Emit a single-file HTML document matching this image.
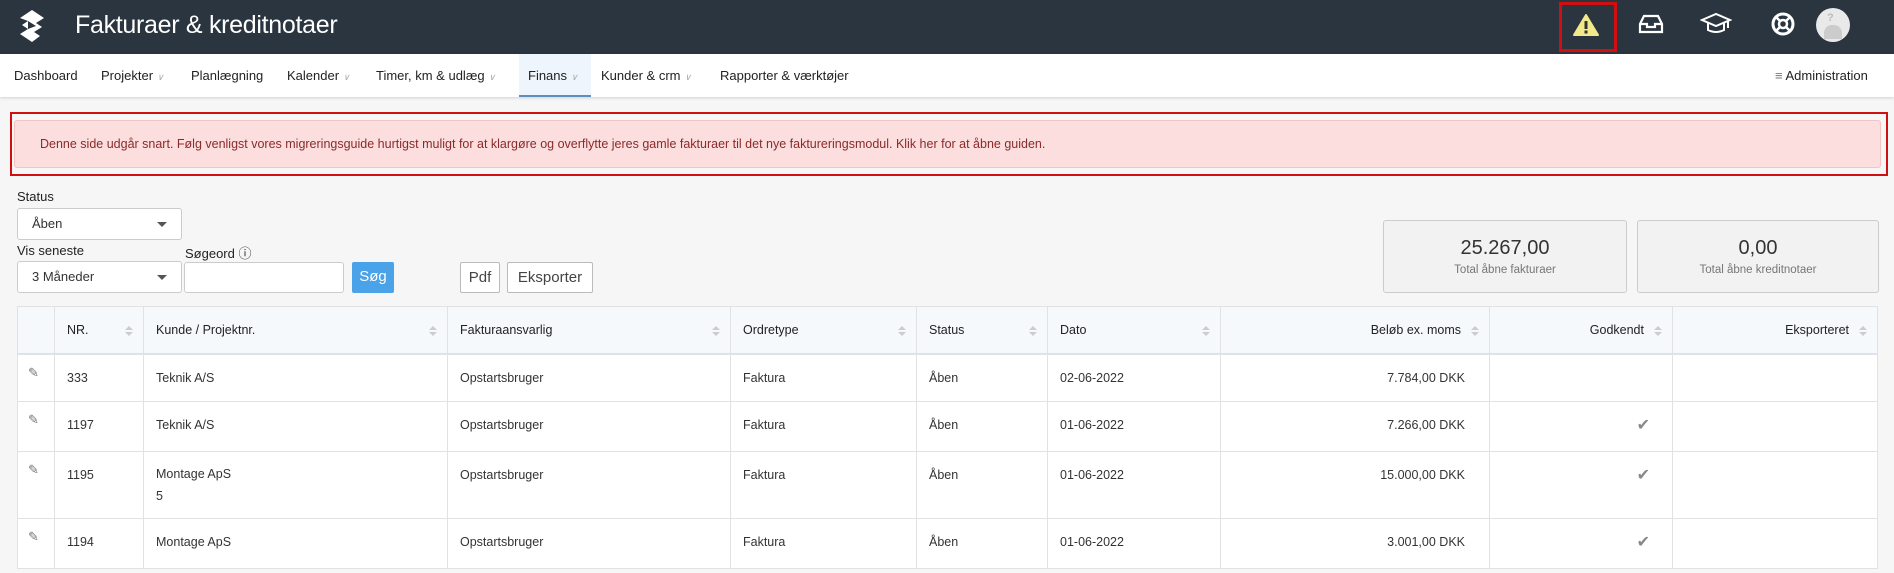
<!DOCTYPE html>
<html><head><meta charset="utf-8"><style>
*{box-sizing:border-box;margin:0;padding:0}
body{width:1894px;height:573px;overflow:hidden;background:#f6f6f6;font-family:"Liberation Sans",sans-serif;color:#333;font-size:13px;position:relative}
.abs{position:absolute}
.top{left:0;top:0;width:1894px;height:54px;background:#2b353f}
.title{left:75px;top:11px;color:#fff;font-size:25px;letter-spacing:-0.3px}
.nav{left:0;top:54px;width:1894px;height:43px;background:#fff;box-shadow:0 1px 3px rgba(0,0,0,.15)}
.nav span{position:absolute;top:14px;font-size:13px;color:#222}
.car{color:#aaa;font-size:9px;margin-left:4px}
.alertout{left:10px;top:112px;width:1878px;height:64px;border:2px solid #d01010}
.alert{left:14px;top:120px;width:1867px;height:48px;background:#fddede;border:1px solid #f2c4c4;border-radius:3px;color:#8a2a2a;font-size:12.5px;padding:16px 0 0 25px}
.lbl{font-size:13px;color:#222}
.sel{background:#fff;border:1px solid #ccc;border-radius:3px;font-size:13px;padding:7px 0 0 14px;color:#333}
.sel:after{content:"";position:absolute;right:14px;top:13px;border:5px solid transparent;border-top:5px solid #555}
.btn{background:#fff;border:1px solid #bbb;border-radius:2px;font-size:15px;text-align:center;padding-top:6px;color:#444}
.box{background:#f2f2f2;border:1px solid #ccc;border-radius:3px;text-align:center}
.box b{display:block;font-weight:normal;font-size:20px;margin-top:16px;color:#333}
.box i{display:block;font-style:normal;font-size:11.5px;color:#777;margin-top:4px}
table{position:absolute;left:17px;top:306px;width:1861px;border-collapse:collapse;background:#fff}
td,th{border:1px solid #e2e2e2;font-size:12.5px;text-align:left;padding:0 12px;vertical-align:top;font-weight:normal;position:relative}
th{background:#f6f9fc;height:47px;vertical-align:middle;border-bottom:2px solid #dde3ea;color:#222}
th.s:after{content:"";position:absolute;right:10px;top:19px;width:0;height:0;border:4px solid transparent;border-bottom:4px solid #ccc;border-top:0}
th.s:before{content:"";position:absolute;right:10px;top:25px;width:0;height:0;border:4px solid transparent;border-top:4px solid #ccc;border-bottom:0}
td{padding-top:16px;color:#333}
.r{text-align:right;padding-right:24px}
.pen{color:#777;font-size:13px;padding-left:10px;padding-top:10px}
.chk{color:#888;text-align:right;padding-right:22px;font-size:16px;padding-top:13px}
</style></head><body>
<div class="abs top"></div>
<svg class="abs" style="left:14px;top:8px" width="38" height="36" viewBox="0 0 38 36"><path d="M6 10 L18 2 L30 10 L22 15 L28 19 L20 24 L26 28 L18 34 L6 26 L14 21 L8 17 L14 13 Z" fill="#fff"/><path d="M14 13 L22 18 L14 21 Z" fill="#2b353f"/></svg>
<div class="abs title">Fakturaer &amp; kreditnotaer</div>
<div class="abs" style="left:1559px;top:2px;width:58px;height:50px;border:3px solid #d01010"></div>
<svg class="abs" style="left:1572px;top:13px" width="28" height="24" viewBox="0 0 28 24"><path d="M14 2 L26 22 L2 22 Z" fill="#f2e98a" stroke="#f2e98a" stroke-width="2" stroke-linejoin="round"/><rect x="12.5" y="8" width="3" height="8" fill="#333"/><rect x="12.5" y="17.5" width="3" height="3" fill="#333"/></svg>
<svg class="abs" style="left:1637px;top:12px" width="28" height="24" viewBox="0 0 28 24"><path d="M3 12 L7 4 H21 L25 12 V20 H3 Z M3 12 H10 V15 H18 V12 H25" fill="none" stroke="#fff" stroke-width="2.2"/></svg>
<svg class="abs" style="left:1700px;top:12px" width="32" height="24" viewBox="0 0 32 24"><path d="M2 8 L16 2 L30 8 L16 14 Z M8 11 V18 Q16 22 24 18 V11 M28 9 V16" fill="none" stroke="#fff" stroke-width="2"/></svg>
<svg class="abs" style="left:1770px;top:11px" width="26" height="26" viewBox="0 0 26 26"><circle cx="13" cy="13" r="10" fill="none" stroke="#fff" stroke-width="3"/><circle cx="13" cy="13" r="4" fill="none" stroke="#fff" stroke-width="2.5"/><path d="M6 6 L10 10 M20 6 L16 10 M6 20 L10 16 M20 20 L16 16" stroke="#fff" stroke-width="2.5"/></svg>
<div class="abs" style="left:1816px;top:8px;width:34px;height:34px;border-radius:50%;background:#e9e9e9"><div style="position:absolute;left:11px;top:4px;color:#bbb;font-size:11px;font-weight:bold">?</div><div style="position:absolute;left:8px;top:17px;width:18px;height:14px;background:#ccc;border-radius:8px 8px 0 0"></div></div>
<div class="abs nav">
<span style="left:14px">Dashboard</span>
<span style="left:101px">Projekter<i class="car">∨</i></span>
<span style="left:191px">Planlægning</span>
<span style="left:287px">Kalender<i class="car">∨</i></span>
<span style="left:376px">Timer, km &amp; udlæg<i class="car">∨</i></span>
<div style="position:absolute;left:519px;top:0;width:72px;height:43px;background:#eef5fc;border-bottom:2px solid #5a8fc0"></div>
<span style="left:528px">Finans<i class="car">∨</i></span>
<span style="left:601px">Kunder &amp; crm<i class="car">∨</i></span>
<span style="left:720px">Rapporter &amp; værktøjer</span>
<span style="left:1775px"><i style="font-style:normal;color:#777">≡</i> Administration</span>
</div>
<div class="abs alertout"></div>
<div class="abs alert">Denne side udgår snart. Følg venligst vores migreringsguide hurtigst muligt for at klargøre og overflytte jeres gamle fakturaer til det nye faktureringsmodul. Klik her for at åbne guiden.</div>
<div class="abs lbl" style="left:17px;top:189px">Status</div>
<div class="abs sel" style="left:17px;top:208px;width:165px;height:32px">Åben</div>
<div class="abs lbl" style="left:17px;top:243px">Vis seneste</div>
<div class="abs lbl" style="left:185px;top:243px">Søgeord ⓘ</div>
<div class="abs sel" style="left:17px;top:261px;width:165px;height:32px">3 Måneder</div>
<div class="abs" style="left:184px;top:262px;width:160px;height:31px;background:#fff;border:1px solid #ccc;border-radius:3px"></div>
<div class="abs" style="left:352px;top:262px;width:42px;height:31px;background:#4aa3e8;border-radius:2px;color:#fff;font-size:15px;text-align:center;padding-top:6px">Søg</div>
<div class="abs btn" style="left:460px;top:262px;width:40px;height:31px">Pdf</div>
<div class="abs btn" style="left:507px;top:262px;width:86px;height:31px">Eksporter</div>
<div class="abs box" style="left:1383px;top:220px;width:244px;height:73px"><b>25.267,00</b><i>Total åbne fakturaer</i></div>
<div class="abs box" style="left:1637px;top:220px;width:242px;height:73px"><b>0,00</b><i>Total åbne kreditnotaer</i></div>
<table>
<tr><th style="width:37px"></th><th class="s" style="width:89px">NR.</th><th class="s" style="width:304px">Kunde / Projektnr.</th><th class="s" style="width:283px">Fakturaansvarlig</th><th class="s" style="width:186px">Ordretype</th><th class="s" style="width:131px">Status</th><th class="s" style="width:173px">Dato</th><th class="s r" style="width:269px;padding-right:28px">Beløb ex. moms</th><th class="s r" style="width:183px;padding-right:28px">Godkendt</th><th class="s r" style="padding-right:28px">Eksporteret</th></tr>
<tr style="height:48px"><td class="pen">✎</td><td>333</td><td>Teknik A/S</td><td>Opstartsbruger</td><td>Faktura</td><td>Åben</td><td>02-06-2022</td><td class="r">7.784,00 DKK</td><td></td><td></td></tr>
<tr style="height:50px"><td class="pen">✎</td><td>1197</td><td>Teknik A/S</td><td>Opstartsbruger</td><td>Faktura</td><td>Åben</td><td>01-06-2022</td><td class="r">7.266,00 DKK</td><td class="chk">✔</td><td></td></tr>
<tr style="height:67px"><td class="pen">✎</td><td>1195</td><td style="line-height:22px;padding-top:11px">Montage ApS<br>5</td><td>Opstartsbruger</td><td>Faktura</td><td>Åben</td><td>01-06-2022</td><td class="r">15.000,00 DKK</td><td class="chk">✔</td><td></td></tr>
<tr style="height:50px"><td class="pen">✎</td><td>1194</td><td>Montage ApS</td><td>Opstartsbruger</td><td>Faktura</td><td>Åben</td><td>01-06-2022</td><td class="r">3.001,00 DKK</td><td class="chk">✔</td><td></td></tr>
</table>
</body></html>
